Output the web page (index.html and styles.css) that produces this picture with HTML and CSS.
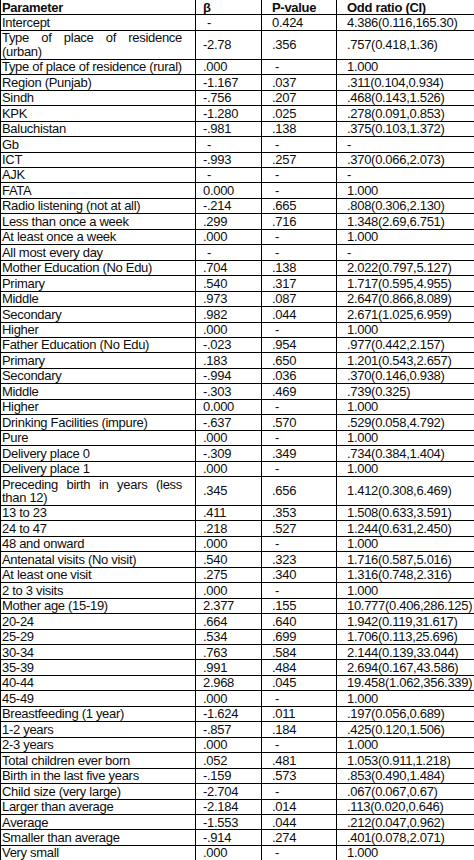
FILE: index.html
```html
<!DOCTYPE html>
<html>
<head>
<meta charset="utf-8">
<link rel="stylesheet" href="styles.css">
</head>
<body>
<table class="tbl">
<colgroup><col class="c1"><col class="c2"><col class="c3"><col class="c4"></colgroup>
<thead>
<tr><th class="p">Parameter</th><th class="b">β</th><th class="v">P-value</th><th class="o">Odd ratio (CI)</th></tr>
</thead>
<tbody>
<tr><td class="p">Intercept</td><td class="b d">-</td><td class="v">0.424</td><td class="o">4.386(0.116,165.30)</td></tr>
<tr><td class="p">Type of place of residence (urban)</td><td class="b">-2.78</td><td class="v">.356</td><td class="o">.757(0.418,1.36)</td></tr>
<tr><td class="p">Type of place of residence (rural)</td><td class="b">.000</td><td class="v d">-</td><td class="o">1.000</td></tr>
<tr><td class="p">Region (Punjab)</td><td class="b">-1.167</td><td class="v">.037</td><td class="o">.311(0.104,0.934)</td></tr>
<tr><td class="p">Sindh</td><td class="b">-.756</td><td class="v">.207</td><td class="o">.468(0.143,1.526)</td></tr>
<tr><td class="p">KPK</td><td class="b">-1.280</td><td class="v">.025</td><td class="o">.278(0.091,0.853)</td></tr>
<tr><td class="p">Baluchistan</td><td class="b">-.981</td><td class="v">.138</td><td class="o">.375(0.103,1.372)</td></tr>
<tr><td class="p">Gb</td><td class="b d">-</td><td class="v d">-</td><td class="o">-</td></tr>
<tr><td class="p">ICT</td><td class="b">-.993</td><td class="v">.257</td><td class="o">.370(0.066,2.073)</td></tr>
<tr><td class="p">AJK</td><td class="b d">-</td><td class="v d">-</td><td class="o">-</td></tr>
<tr><td class="p">FATA</td><td class="b">0.000</td><td class="v d">-</td><td class="o">1.000</td></tr>
<tr><td class="p">Radio listening (not at all)</td><td class="b">-.214</td><td class="v">.665</td><td class="o">.808(0.306,2.130)</td></tr>
<tr><td class="p">Less than once a week</td><td class="b">.299</td><td class="v">.716</td><td class="o">1.348(2.69,6.751)</td></tr>
<tr><td class="p">At least once a week</td><td class="b">.000</td><td class="v d">-</td><td class="o">1.000</td></tr>
<tr><td class="p">All most every day</td><td class="b d">-</td><td class="v d">-</td><td class="o">-</td></tr>
<tr><td class="p">Mother Education (No Edu)</td><td class="b">.704</td><td class="v">.138</td><td class="o">2.022(0.797,5.127)</td></tr>
<tr><td class="p">Primary</td><td class="b">.540</td><td class="v">.317</td><td class="o">1.717(0.595,4.955)</td></tr>
<tr><td class="p">Middle</td><td class="b">.973</td><td class="v">.087</td><td class="o">2.647(0.866,8.089)</td></tr>
<tr><td class="p">Secondary</td><td class="b">.982</td><td class="v">.044</td><td class="o">2.671(1.025,6.959)</td></tr>
<tr><td class="p">Higher</td><td class="b">.000</td><td class="v d">-</td><td class="o">1.000</td></tr>
<tr><td class="p">Father Education (No Edu)</td><td class="b">-.023</td><td class="v">.954</td><td class="o">.977(0.442,2.157)</td></tr>
<tr><td class="p">Primary</td><td class="b">.183</td><td class="v">.650</td><td class="o">1.201(0.543,2.657)</td></tr>
<tr><td class="p">Secondary</td><td class="b">-.994</td><td class="v">.036</td><td class="o">.370(0.146,0.938)</td></tr>
<tr><td class="p">Middle</td><td class="b">-.303</td><td class="v">.469</td><td class="o">.739(0.325)</td></tr>
<tr><td class="p">Higher</td><td class="b">0.000</td><td class="v d">-</td><td class="o">1.000</td></tr>
<tr><td class="p">Drinking Facilities (impure)</td><td class="b">-.637</td><td class="v">.570</td><td class="o">.529(0.058,4.792)</td></tr>
<tr><td class="p">Pure</td><td class="b">.000</td><td class="v d">-</td><td class="o">1.000</td></tr>
<tr><td class="p">Delivery place 0</td><td class="b">-.309</td><td class="v">.349</td><td class="o">.734(0.384,1.404)</td></tr>
<tr><td class="p">Delivery place 1</td><td class="b">.000</td><td class="v d">-</td><td class="o">1.000</td></tr>
<tr><td class="p">Preceding birth in years (less than 12)</td><td class="b">.345</td><td class="v">.656</td><td class="o">1.412(0.308,6.469)</td></tr>
<tr><td class="p">13 to 23</td><td class="b">.411</td><td class="v">.353</td><td class="o">1.508(0.633,3.591)</td></tr>
<tr><td class="p">24 to 47</td><td class="b">.218</td><td class="v">.527</td><td class="o">1.244(0.631,2.450)</td></tr>
<tr><td class="p">48 and onward</td><td class="b">.000</td><td class="v d">-</td><td class="o">1.000</td></tr>
<tr><td class="p">Antenatal visits (No visit)</td><td class="b">.540</td><td class="v">.323</td><td class="o">1.716(0.587,5.016)</td></tr>
<tr><td class="p">At least one visit</td><td class="b">.275</td><td class="v">.340</td><td class="o">1.316(0.748,2.316)</td></tr>
<tr><td class="p">2 to 3 visits</td><td class="b">.000</td><td class="v d">-</td><td class="o">1.000</td></tr>
<tr><td class="p">Mother age (15-19)</td><td class="b">2.377</td><td class="v">.155</td><td class="o">10.777(0.406,286.125)</td></tr>
<tr><td class="p">20-24</td><td class="b">.664</td><td class="v">.640</td><td class="o">1.942(0.119,31.617)</td></tr>
<tr><td class="p">25-29</td><td class="b">.534</td><td class="v">.699</td><td class="o">1.706(0.113,25.696)</td></tr>
<tr><td class="p">30-34</td><td class="b">.763</td><td class="v">.584</td><td class="o">2.144(0.139,33.044)</td></tr>
<tr><td class="p">35-39</td><td class="b">.991</td><td class="v">.484</td><td class="o">2.694(0.167,43.586)</td></tr>
<tr><td class="p">40-44</td><td class="b">2.968</td><td class="v">.045</td><td class="o">19.458(1.062,356.339)</td></tr>
<tr><td class="p">45-49</td><td class="b">.000</td><td class="v d">-</td><td class="o">1.000</td></tr>
<tr><td class="p">Breastfeeding (1 year)</td><td class="b">-1.624</td><td class="v">.011</td><td class="o">.197(0.056,0.689)</td></tr>
<tr><td class="p">1-2 years</td><td class="b">-.857</td><td class="v">.184</td><td class="o">.425(0.120,1.506)</td></tr>
<tr><td class="p">2-3 years</td><td class="b">.000</td><td class="v d">-</td><td class="o">1.000</td></tr>
<tr><td class="p">Total children ever born</td><td class="b">.052</td><td class="v">.481</td><td class="o">1.053(0.911,1.218)</td></tr>
<tr><td class="p">Birth in the last five years</td><td class="b">-.159</td><td class="v">.573</td><td class="o">.853(0.490,1.484)</td></tr>
<tr><td class="p">Child size (very large)</td><td class="b">-2.704</td><td class="v d">-</td><td class="o">.067(0.067,0.67)</td></tr>
<tr><td class="p">Larger than average</td><td class="b">-2.184</td><td class="v">.014</td><td class="o">.113(0.020,0.646)</td></tr>
<tr><td class="p">Average</td><td class="b">-1.553</td><td class="v">.044</td><td class="o">.212(0.047,0.962)</td></tr>
<tr><td class="p">Smaller than average</td><td class="b">-.914</td><td class="v">.274</td><td class="o">.401(0.078,2.071)</td></tr>
<tr><td class="p">Very small</td><td class="b">.000</td><td class="v d">-</td><td class="o">1.000</td></tr>
</tbody>
</table>
</body>
</html>
```

FILE: styles.css
```css
html, body {
  margin: 0;
  padding: 0;
  background: #ffffff;
}

body {
  font-family: "Liberation Sans", Arial, sans-serif;
  font-size: 13px;
  letter-spacing: -0.3px;
  color: #0d0d0d;
  overflow: hidden;
}

.tbl {
  border-collapse: collapse;
  table-layout: fixed;
  width: 480px;
}

.c1 { width: 195px; }
.c2 { width: 66px; }
.c3 { width: 75px; }
.c4 { width: 144px; }

.tbl th,
.tbl td {
  border: 1px solid #000;
  padding: 0.5px 0;
  line-height: 13.45px;
  vertical-align: middle;
  text-align: left;
  white-space: nowrap;
}

.tbl thead th {
  border-top: none;
  font-weight: bold;
}

.tbl .p {
  padding-left: 1px;
  padding-right: 13px;
  text-align: justify;
  white-space: normal;
}

.tbl .b { padding-left: 7px; }
.tbl .v { padding-left: 10px; }
.tbl .o { padding-left: 10px; }
.tbl .d.b { padding-left: 11px; }
.tbl .d.v { padding-left: 13px; }
```
